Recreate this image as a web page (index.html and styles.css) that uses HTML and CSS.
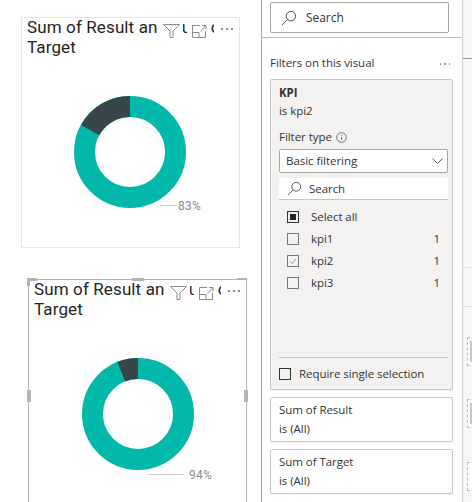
FILE: index.html
```html
<!DOCTYPE html>
<html lang="en">
<head>
<meta charset="utf-8">
<title>Filters</title>
<link rel="stylesheet" href="styles.css">
</head>
<body>
<div class="app">
  <main class="canvas">
    <section class="visual first">
      <h2 class="title">Sum of Result and Sum of Target</h2>
      <div class="head-icons">
        <span class="ico-box filter-box"><svg class="filter-ico" viewBox="0 0 17 14"><path d="M.5.5h16l-6.500 6.500v6.500H7V7z"/></svg></span>
        <span class="ico-box focus-box"><svg class="focus-ico" viewBox="0 0 15 13"><path d="M8 .5H.5v12h13V6M.5 7.500H7v5M8.500 6.500l5-5.500M10 .5h4V4.500"/></svg></span>
        <span class="ico-box dots-box"><i></i><i></i><i></i></span>
      </div>
      <svg class="donut" viewBox="0 0 112 112"><circle class="track" cx="56" cy="56" r="45.500" pathLength="100"/><circle class="part part-83" cx="56" cy="56" r="45.500" pathLength="100"/></svg>
      <span class="leader"></span><span class="pct">83%</span>
    </section>
    <section class="visual second">
      <h2 class="title">Sum of Result and Sum of Target</h2>
      <div class="head-icons">
        <span class="ico-box filter-box"><svg class="filter-ico" viewBox="0 0 17 14"><path d="M.5.5h16l-6.500 6.500v6.500H7V7z"/></svg></span>
        <span class="ico-box focus-box"><svg class="focus-ico" viewBox="0 0 15 13"><path d="M8 .5H.5v12h13V6M.5 7.500H7v5M8.500 6.500l5-5.500M10 .5h4V4.500"/></svg></span>
        <span class="ico-box dots-box"><i></i><i></i><i></i></span>
      </div>
      <svg class="donut" viewBox="0 0 112 112"><circle class="track" cx="56" cy="56" r="45.500" pathLength="100"/><circle class="part part-94" cx="56" cy="56" r="45.500" pathLength="100"/></svg>
      <span class="leader"></span><span class="pct">94%</span>
      <span class="grip tl"></span><span class="grip tm"></span><span class="grip tr"></span><span class="grip ml"></span><span class="grip mr"></span>
    </section>
  </main>
  <aside class="pane">
    <div class="search-wrap">
      <div class="search">
        <svg class="search-ico" viewBox="0 0 17 17"><circle cx="10.500" cy="6.500" r="5"/><path d="M7 10l-6 6"/></svg>
        <span>Search</span>
      </div>
    </div>
    <div class="pane-body">
      <div class="pane-head"><span>Filters on this visual</span><span class="more"><i></i><i></i><i></i></span></div>
      <div class="card open">
        <div class="name">KPI</div>
        <div class="val">is kpi2</div>
        <div class="ftype">Filter type <svg class="info" viewBox="0 0 11 11"><circle cx="5.500" cy="5.500" r="4.800"/><path d="M5.500 5v3M5.500 2.800v1"/></svg></div>
        <div class="select"><span>Basic filtering</span><svg class="chev" viewBox="0 0 11 6"><path d="M.5.5l5 5 5-5"/></svg></div>
        <div class="mini-search">
          <svg class="search-ico small" viewBox="0 0 17 17"><circle cx="10.500" cy="6.500" r="5"/><path d="M7 10l-6 6"/></svg>
          <span>Search</span>
        </div>
        <ul class="list">
          <li><span class="box partial"></span><span class="lbl">Select all</span></li>
          <li><span class="box"></span><span class="lbl">kpi1</span><span class="n">1</span></li>
          <li><span class="box"><svg viewBox="0 0 12 12"><path d="M2.500 6.500l2.500 2.500 4.500-5.500"/></svg></span><span class="lbl">kpi2</span><span class="n">1</span></li>
          <li><span class="box"></span><span class="lbl">kpi3</span><span class="n">1</span></li>
        </ul>
        <div class="single"><span class="box dark"></span><span>Require single selection</span></div>
      </div>
      <div class="card"><div>Sum of Result</div><div>is (All)</div></div>
      <div class="card"><div>Sum of Target</div><div>is (All)</div></div>
    </div>
  </aside>
  <div class="strip">
    <span class="s-rule r1"></span><span class="s-rule r2"></span><span class="s-rule r3"></span>
    <span class="well w1"></span><span class="well w2"></span><span class="well w3"></span>
  </div>
</div>
</body>
</html>
```
FILE: styles.css
```css
* { box-sizing: border-box; }
html, body { margin: 0; padding: 0; }
body { width: 472px; height: 502px; overflow: hidden; background: #fff; font-family: "Open Sans", "Noto Sans", sans-serif; color: #333; }
.app { display: flex; width: 472px; height: 502px; overflow: hidden; }
.canvas { width: 261px; flex: none; display: flex; flex-direction: column; padding: 17px 0 0 21px; }
.visual { position: relative; width: 219px; flex: none; }
.first { height: 231px; border: 1px solid #e6e6e6; }
.second { height: 223px; margin: 31px 0 0 7px; border: 1px solid #b3b3b3; border-bottom: 0; }
.title { margin: 0; padding: 0 0 0 5px; width: 213px; font: 400 17px/20px "Roboto", "DejaVu Sans", sans-serif; letter-spacing: .12px; color: #252423; position: absolute; left: 0; top: -1px; }
.head-icons { position: absolute; left: 136px; top: 0; height: 20px; display: flex; gap: 4px; }
.ico-box { display: flex; align-items: center; background: #fff; height: 20px; }
.filter-box { width: 25px; padding: 6px 0 0 5px; }
.focus-box { width: 24px; padding: 6px 0 0 5px; margin-right: -1px; }
.dots-box { width: 24px; padding: 2px 0 0 7px; gap: 3px; }
.dots-box i, .more i { display: block; width: 2px; height: 2px; background: #666; border-radius: 50%; }
.filter-ico { width: 17px; height: 14px; fill: #fff; stroke: #8c8c8c; stroke-width: 1; flex: none; }
.focus-ico { width: 15px; height: 13px; fill: #fff; stroke: #8c8c8c; stroke-width: 1; flex: none; }
.donut { position: absolute; left: 52px; top: 78px; width: 112px; height: 112px; fill: none; }
.second .donut { left: 53px; }
.track { stroke: #01b8aa; stroke-width: 21; }
.part { stroke: #374649; stroke-width: 21; transform: rotate(-90deg); transform-origin: 56px 56px; }
.part-83 { stroke-dasharray: 17 83; stroke-dashoffset: 17; }
.part-94 { stroke-dasharray: 6 94; stroke-dashoffset: 6; }
.leader { position: absolute; height: 1px; background: #ccc; }
.first .leader { left: 138px; top: 187px; width: 17px; }
.second .leader { left: 119px; top: 194px; width: 36px; }
.pct { position: absolute; font: 400 12px/14px "Roboto", sans-serif; color: #8c8c8c; letter-spacing: .2px; }
.first .pct { left: 156px; top: 181px; }
.second .pct { left: 160px; top: 188px; }
.grip { position: absolute; border-color: #b3b3b3; border-style: solid; border-width: 0; }
.tl { left: -2px; top: -2px; width: 10px; height: 8px; border-top-width: 3px; border-left-width: 3px; }
.tm { left: 103px; top: -2px; width: 12px; height: 3px; background: #b3b3b3; }
.tr { right: -1px; top: -2px; width: 10px; height: 9px; border-top-width: 2px; border-right-width: 1px; }
.ml { left: -2px; top: 110px; width: 4px; height: 12px; background: #b3b3b3; }
.mr { right: -2px; top: 110px; width: 4px; height: 12px; background: #b3b3b3; }
.pane { width: 202px; flex: none; background: #fff; border-left: 1px solid #a6a6a6; border-right: 1px solid #d2d0ce; height: 502px; font-size: 11.500px; line-height: 18px; color: #333; letter-spacing: -.05px; }
.search-wrap { height: 38px; padding: 2px 13px 0 8px; border-bottom: 1px solid #bdbdbd; }
.search { display: flex; align-items: center; gap: 9px; height: 31px; border: 1px solid #a6a6a6; border-radius: 2px; padding: 0 0 0 10px; font-size: 12px; }
.search-ico { width: 16px; height: 16px; fill: none; stroke: #444; stroke-width: 1; flex: none; }
.search-ico.small { width: 15px; height: 15px; }
.pane-body { padding: 16px 9px 0 8px; }
.pane-head { display: flex; justify-content: space-between; height: 22px; padding-right: 3px; }
.more { display: flex; align-items: center; gap: 3px; height: 18px; padding-top: 2px; }
.more i { background: #888; width: 1.500px; height: 1.500px; }
.card { border: 1px solid #c8c6c4; border-radius: 2px; background: #fff; padding: 3px 8px 0; height: 45px; margin-top: 7px; line-height: 18.500px; box-shadow: 0 1px 1px rgba(0,0,0,.06); }
.card.open { height: 311px; margin-top: 3px; background: #f3f2f1; padding: 4px 4px 0 8px; line-height: 18px; }
.name { font-weight: 700; }
.ftype { margin-top: 8px; display: flex; align-items: center; gap: 4px; height: 18px; }
.info { width: 11px; height: 11px; fill: none; stroke: #555; stroke-width: .8; }
.select { margin-top: 3px; height: 24px; background: #fff; border: 1px solid #a6a6a6; border-radius: 2px; display: flex; align-items: center; justify-content: space-between; padding: 0 4px 0 6px; }
.chev { width: 11px; height: 6px; fill: none; stroke: #555; }
.mini-search { height: 22px; margin-top: 5px; background: #fff; border-bottom: 1px solid #c8c6c4; display: flex; align-items: center; gap: 7px; padding-left: 8px; }
.list { list-style: none; margin: 6px 0 0; padding: 0; height: 152px; border-bottom: 1px solid #c8c6c4; }
.list li { display: flex; align-items: center; height: 22px; padding: 0 8px; }
.box { width: 12px; height: 12px; flex: none; border: 1px solid #777; display: flex; align-items: center; justify-content: center; }
.box svg { width: 10px; height: 10px; fill: none; stroke: #888; }
.partial { border-color: #333; }
.partial::after { content: ""; width: 6px; height: 6px; background: #252423; }
.lbl { margin-left: 12px; flex: 1; }
.single { display: flex; align-items: center; gap: 8px; height: 26px; margin-top: 3px; }
.dark { border-color: #333; }
.strip { flex: 1; position: relative; background: #f7f7f7; }
.s-rule { position: absolute; left: 0; right: 0; height: 1px; background: #e1dfdd; }
.r1 { top: 58px; background: #999; }
.r2 { top: 267px; }
.r3 { top: 306px; }
.well { position: absolute; left: 4px; width: 12px; height: 29px; border: 1px dashed #bbb; border-right: 0; background: #fff; }
.well::after { content: ""; position: absolute; left: 2px; top: 3px; right: 0; bottom: 3px; background: #c8c8c8; }
.w1 { top: 337px; }
.w2 { top: 399px; }
.w3 { top: 462px; }
.w3::after { display: none; }
```
